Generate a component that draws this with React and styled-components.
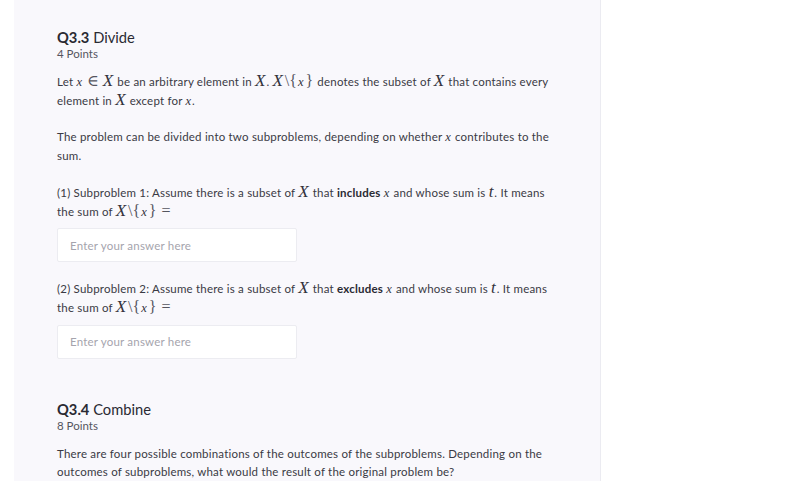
import styled, { createGlobalStyle } from "styled-components";

const GlobalStyle = createGlobalStyle`
  body {
    margin: 0;
    background: #ffffff;
    font-family: "Lato", "Liberation Sans", sans-serif;
  }
`

const Page = styled.div`
  display: flex;
  min-height: 100vh;
`

const Panel = styled.div`
  margin-left: 14px;
  width: 543px;
  padding: 28px 0 40px 43px;
  background: #f9f8fc;
  border-right: 1px solid #ebebf1;
  display: flex;
  flex-direction: column;
`

const Question = styled.section`
  display: flex;
  flex-direction: column;
  margin-bottom: ${(p) => p.$gap || 0}px;
`

const Title = styled.h2`
  margin: 0;
  font-size: 14.7px;
  line-height: 18px;
  font-weight: 400;
  color: #2a2a33;

  b {
    font-weight: 700;
  }
`

const Points = styled.div`
  font-size: 11.5px;
  line-height: 16px;
  color: #55555f;
  margin-bottom: 11px;
`

const Para = styled.p`
  margin: 0 0 ${(p) => (p.$tight ? 7 : 18)}px;
  font-size: 11.5px;
  letter-spacing: 0.2px;
  line-height: 18.7px;
  color: #3a3a44;
  max-width: 500px;

  b {
    font-weight: 700;
    color: #2a2a33;
  }
`

const M = styled.span`
  font-family: "Liberation Serif", "DejaVu Serif", serif;
  font-style: italic;
  font-size: ${(p) => (p.$big ? 17 : 12.5)}px;
  letter-spacing: 0;
  line-height: 0;
  color: #33333c;
  padding-right: 1px;
`

const Up = styled.span`
  font-family: "Liberation Serif", "DejaVu Serif", serif;
  font-style: normal;
  font-size: 16px;
  letter-spacing: 0;
  line-height: 0;
  color: #55555f;
  padding: 0 ${(p) => (p.$rel ? 4 : 1)}px;
`

const Answer = styled.input`
  box-sizing: border-box;
  width: 240px;
  height: 34px;
  margin-bottom: 18px;
  padding: 0 12px;
  border: 1px solid #ececf1;
  border-radius: 2px;
  background: #ffffff;
  font-family: "Lato", "Liberation Sans", sans-serif;
  font-size: 11.5px;
  letter-spacing: 0.2px;
  color: #333;
  outline: none;

  &::placeholder {
    color: #a5a4ad;
  }
`

const SetMinus = () => (
  <>
    <M $big>X</M>
    <Up>{"\\{"}</Up>
    <M>x</M>
    <Up>{"}"}</Up>
  </>
)

export default function App() {
  return (
    <Page>
      <GlobalStyle />
      <Panel>
        <Question $gap={23}>
          <Title>
            <b>Q3.3</b> Divide
          </Title>
          <Points>4 Points</Points>
          <Para>
            Let <M>x</M>
            <Up $rel>∈</Up>
            <M $big>X</M> be an arbitrary element in <M $big>X</M>. <SetMinus /> denotes the
            subset of <M $big>X</M> that contains every element in <M $big>X</M> except for{" "}
            <M>x</M>.
          </Para>
          <Para>
            The problem can be divided into two subproblems, depending on whether <M>x</M>{" "}
            contributes to the sum.
          </Para>
          <Para $tight>
            (1) Subproblem 1: Assume there is a subset of <M $big>X</M> that <b>includes</b>{" "}
            <M>x</M> and whose sum is <M $big>t</M>. It means the sum of <SetMinus />
            <Up $rel>=</Up>
          </Para>
          <Answer placeholder="Enter your answer here" />
          <Para $tight>
            (2) Subproblem 2: Assume there is a subset of <M $big>X</M> that <b>excludes</b>{" "}
            <M>x</M> and whose sum is <M $big>t</M>. It means the sum of <SetMinus />
            <Up $rel>=</Up>
          </Para>
          <Answer placeholder="Enter your answer here" />
        </Question>
        <Question>
          <Title>
            <b>Q3.4</b> Combine
          </Title>
          <Points>8 Points</Points>
          <Para>
            There are four possible combinations of the outcomes of the subproblems. Depending on
            the outcomes of subproblems, what would the result of the original problem be?
          </Para>
        </Question>
      </Panel>
    </Page>
  );
}
